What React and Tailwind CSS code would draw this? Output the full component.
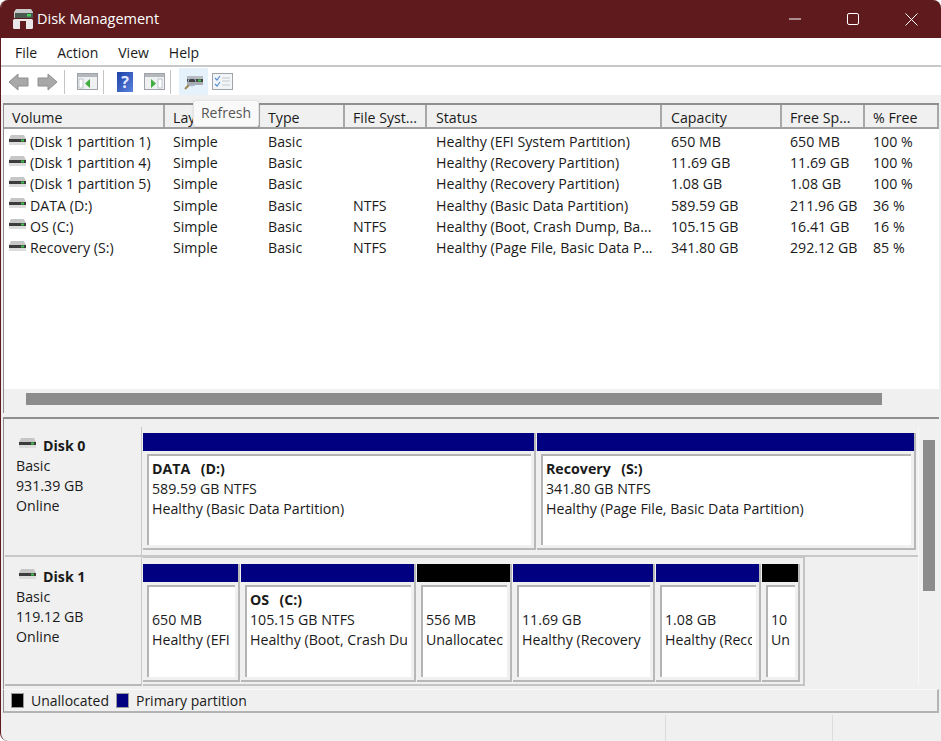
const FONT = "font-['Open_Sans','Noto_Sans',sans-serif]";

const COLS = [
  { label: 'Volume', w: 'w-[161px]', pl: 'pl-[8px]' },
  { label: 'Layout', w: 'w-[95px]', pl: 'pl-[8px]' },
  { label: 'Type', w: 'w-[85px]', pl: 'pl-[8px]' },
  { label: 'File Syst...', w: 'w-[82px]', pl: 'pl-[8px]' },
  { label: 'Status', w: 'w-[235px]', pl: 'pl-[9px]' },
  { label: 'Capacity', w: 'w-[120px]', pl: 'pl-[9px]' },
  { label: 'Free Sp...', w: 'w-[83px]', pl: 'pl-[8px]' },
  { label: '% Free', w: 'w-[74px]', pl: 'pl-[8px]' },
];

const ROWS = [
  ['(Disk 1 partition 1)', 'Simple', 'Basic', '', 'Healthy (EFI System Partition)', '650 MB', '650 MB', '100 %'],
  ['(Disk 1 partition 4)', 'Simple', 'Basic', '', 'Healthy (Recovery Partition)', '11.69 GB', '11.69 GB', '100 %'],
  ['(Disk 1 partition 5)', 'Simple', 'Basic', '', 'Healthy (Recovery Partition)', '1.08 GB', '1.08 GB', '100 %'],
  ['DATA (D:)', 'Simple', 'Basic', 'NTFS', 'Healthy (Basic Data Partition)', '589.59 GB', '211.96 GB', '36 %'],
  ['OS (C:)', 'Simple', 'Basic', 'NTFS', 'Healthy (Boot, Crash Dump, Ba...', '105.15 GB', '16.41 GB', '16 %'],
  ['Recovery (S:)', 'Simple', 'Basic', 'NTFS', 'Healthy (Page File, Basic Data P...', '341.80 GB', '292.12 GB', '85 %'],
];

const DISK1 = [
  { w: 'w-[97px]', lines: ['650 MB', 'Healthy (EFI'] },
  { w: 'w-[175px]', title: 'OS  (C:)', lines: ['105.15 GB NTFS', 'Healthy (Boot, Crash Du'] },
  { w: 'w-[95px]', black: true, lines: ['556 MB', 'Unallocatec'] },
  { w: 'w-[142px]', lines: ['11.69 GB', 'Healthy (Recovery'] },
  { w: 'w-[105px]', lines: ['1.08 GB', 'Healthy (Reco'] },
  { w: 'w-[38px]', black: true, lines: ['10', 'Un'] },
];

const DiskIcon = ({ className = '' }) => (
  <svg viewBox="0 0 17 11" className={`w-[17px] h-[11px] shrink-0 ${className}`}>
    <path d="M2 0h13l2 4H0z" fill="#c6c6c6" />
    <rect x="0" y="4" width="17" height="3" fill="#3c3c3c" />
    <rect x="12" y="4.5" width="3" height="2" fill="#3fc24a" />
    <rect x="0" y="7" width="17" height="3" fill="#dcdcdc" />
  </svg>
);

const AppIcon = () => (
  <svg viewBox="0 0 22 22" className="w-[22px] h-[22px]">
    <path d="M4 1h15l2 3v6H2V4z" fill="#c9c9c9" />
    <rect x="3" y="5" width="18" height="5" fill="#4a5a50" />
    <rect x="15" y="6" width="4" height="2.5" fill="#43d35a" />
    <rect x="1" y="11" width="20" height="10" rx="1.5" fill="#e8e8e8" />
    <rect x="8" y="13" width="6" height="8" fill="#5e1a1c" />
  </svg>
);

const Arrow = ({ flip }) => (
  <svg viewBox="0 0 21 18" className={`w-[21px] h-[18px] shrink-0 ${flip ? '-scale-x-100' : ''}`}>
    <path d="M1 9l9-8v4h10v8H10v4z" fill="#a8a8a8" stroke="#8f8f8f" />
  </svg>
);

const PaneIcon = ({ right }) => (
  <svg viewBox="0 0 21 17" className="w-[21px] h-[17px] shrink-0">
    <rect x="0.5" y="0.5" width="20" height="16" fill="#eef0f2" stroke="#a0a3a8" />
    <rect x="1" y="1" width="19" height="3" fill="#b4b7bc" />
    <rect x={right ? 14 : 2} y="6" width="4" height="9" fill="#fff" stroke="#9aa4b4" strokeWidth="0.6" />
    <path d={right ? 'M7 6l5 4.5-5 4.5z' : 'M13 6l-5 4.5 5 4.5z'} fill="#3fae3f" />
  </svg>
);

const Sep = () => <div className="w-px h-[24px] shrink-0 bg-[#c4c4c4]" />;

const Partition = ({ w, black, title, lines, last }) => (
  <div className={`${w} shrink-0 flex flex-col border-r-2 border-b-2 border-[#b8b8b8] ${last ? '' : 'mr-[1px]'}`}>
    <div className={`h-[18px] shrink-0 ${black ? 'bg-black' : 'bg-[#000080]'}`} />
    <div className="flex-1 min-h-0 flex pt-[3px] pr-[3px] pb-[3px] pl-[4px]">
      <div className="flex-1 min-w-0 bg-white border-l-2 border-t-2 border-[#b4b4b4] pl-[3px] pr-[4px] pt-[3px]">
        <div className="overflow-hidden whitespace-pre text-[14.2px] leading-[20px]">
          <div className="font-bold h-[20px] [word-spacing:1.5px]">{title}</div>
          {lines.map((l) => (
            <div key={l}>{l}</div>
          ))}
        </div>
      </div>
    </div>
  </div>
);

const DiskLabel = ({ name, size, bottom }) => (
  <div className={`w-[137px] shrink-0 bg-[#f0f0f0] border-r border-[#c8c8c8] pl-[11px] text-[14.2px] leading-[20px] ${bottom ? 'pt-[10px] border-b-2 border-b-[#b8b8b8]' : 'pt-[9px]'}`}>
    <div className="flex items-center font-bold h-[20px]">
      <DiskIcon className="ml-[3px] mr-[7px] -mt-[5px]" />
      {name}
    </div>
    <div>Basic</div>
    <div>{size}</div>
    <div>Online</div>
  </div>
);

export default function App() {
  return (
    <div className={`${FONT} relative w-[941px] h-[741px] overflow-hidden bg-[#f0f0f0] text-[#1a1a1a] flex flex-col border-l border-[#5e1a1c] rounded-t-[8px] rounded-bl-[8px]`}>
      {/* title bar */}
      <div className="h-[38px] -ml-[1px] shrink-0 bg-[#5e1a1c] flex items-center text-white pl-[12px]">
        <AppIcon />
        <span className="ml-[3px] text-[14.5px]">Disk Management</span>
        <div className="ml-auto flex items-center mr-[23px] gap-[46px]">
          <svg viewBox="0 0 12 12" className="w-[12px] h-[12px]"><path d="M0 6h12" stroke="#fff" strokeWidth="1" /></svg>
          <svg viewBox="0 0 12 12" className="w-[12px] h-[12px]"><rect x="0.5" y="0.5" width="11" height="11" rx="1.5" fill="none" stroke="#fff" /></svg>
          <svg viewBox="0 0 13 13" className="w-[13px] h-[13px]"><path d="M0.5 0.5l12 12M12.5 0.5l-12 12" stroke="#fff" /></svg>
        </div>
      </div>

      {/* menu */}
      <div className="h-[29px] shrink-0 bg-white border-b-2 border-[#c8c8c8] flex items-center pl-[14px] pt-[2px] gap-[20px] text-[14px]">
        <span>File</span>
        <span>Action</span>
        <span>View</span>
        <span>Help</span>
      </div>

      {/* toolbar */}
      <div className="h-[28px] shrink-0 bg-white flex items-center pl-[7px] pt-[1px]">
        <Arrow />
        <span className="w-[8px] shrink-0" />
        <Arrow flip />
        <span className="w-[6px] shrink-0" />
        <Sep />
        <span className="w-[12px] shrink-0" />
        <PaneIcon />
        <span className="w-[5px] shrink-0" />
        <Sep />
        <span className="w-[13px] shrink-0" />
        <div className="w-[16px] h-[20px] shrink-0 bg-linear-to-br from-[#1f3fa8] to-[#5a82dc] text-[#e4e8ff] text-[16px] font-bold leading-[20px] text-center">?</div>
        <span className="w-[11px] shrink-0" />
        <PaneIcon right />
        <span className="w-[5px] shrink-0" />
        <Sep />
        <span className="w-[8px] shrink-0" />
        <div className="w-[29px] h-[27px] shrink-0 bg-[#e5f1fb] flex items-center justify-center">
          <svg viewBox="0 0 20 18" className="w-[20px] h-[18px]">
            <rect x="3" y="3" width="16" height="3" fill="#b8bcc0" />
            <rect x="3" y="6" width="16" height="3" fill="#444" />
            <rect x="14" y="6.5" width="3" height="2" fill="#3fc24a" />
            <rect x="3" y="9" width="16" height="3" fill="#a8acb0" />
            <circle cx="8" cy="9" r="4" fill="none" stroke="#9fb4c8" />
            <path d="M5 12l-4 4" stroke="#a08552" strokeWidth="2" />
          </svg>
        </div>
        <span className="w-[4px] shrink-0" />
        <svg viewBox="0 0 21 17" className="w-[21px] h-[17px] shrink-0">
          <rect x="0.5" y="0.5" width="20" height="16" fill="#f2f5f8" stroke="#a0a3a8" />
          <path d="M3 5l2 2 3-4M3 11l2 2 3-4" fill="none" stroke="#5b8fd0" strokeWidth="1.2" />
          <path d="M10 5h8M10 8h8M10 12h8" stroke="#c5c8cc" />
        </svg>
      </div>

      <div className="h-[8px] shrink-0 bg-[#f0f0f0]" />

      {/* volume list */}
      <div className="h-[310px] shrink-0 bg-white ml-[2px] mr-[2px] border-t-2 border-l border-[#8f8f8f] text-[14.2px] flex flex-col">
        <div className="flex h-[24px] shrink-0 bg-[#f0f0f0] border-b-2 border-[#a0a0a0]">
          {COLS.map((c) => (
            <div key={c.label} className={`${c.w} ${c.pl} shrink-0 border-r-2 border-[#a8a8a8] leading-[26px] whitespace-nowrap overflow-hidden`}>
              {c.label}
            </div>
          ))}
        </div>
        <div className="flex-1 pt-[2px]">
          {ROWS.map((r) => (
            <div key={r[0]} className="flex h-[21.2px] leading-[21px]">
              {r.map((v, i) => (
                <div key={i} className={`${COLS[i].w} ${COLS[i].pl} shrink-0 whitespace-nowrap flex items-center overflow-hidden`}>
                  {i === 0 && <DiskIcon className="-ml-[3px] mr-[4px] -mt-[3px]" />}
                  {v}
                </div>
              ))}
            </div>
          ))}
        </div>
        {/* horizontal scrollbar */}
        <div className="h-[24px] shrink-0 bg-[#f0f0f0] pl-[22px] pt-[4px]">
          <div className="w-[856px] h-[12px] bg-[#8c8c8c]" />
        </div>
      </div>

      <div className="h-[6px] shrink-0 ml-[2px] mr-[2px] border-b-2 border-[#8f8f8f] bg-[#f0f0f0]" />

      {/* disk pane */}
      <div className="flex h-[270px] shrink-0 ml-[2px] mr-[2px] pt-[8px] pb-[3px] pl-[1px] bg-[#f0f0f0] border-l border-[#8f8f8f]">
        <div className="w-[913px] shrink-0 flex flex-col">
          <div className="flex h-[130px] shrink-0 border-b-2 border-[#c8c8c8]">
            <DiskLabel name="Disk 0" size="931.39 GB" />
            <div className="w-[775px] shrink-0 pl-[1px] pt-[6px] pb-[5px] flex">
              <Partition w="w-[393px]" title="DATA  (D:)" lines={['589.59 GB NTFS', 'Healthy (Basic Data Partition)']} />
              <Partition w="w-[379px]" title="Recovery  (S:)" last lines={['341.80 GB NTFS', 'Healthy (Page File, Basic Data Partition)']} />
            </div>
          </div>
          <div className="flex flex-1 min-h-0 items-stretch">
            <DiskLabel name="Disk 1" size="119.12 GB" bottom />
            <div className="shrink-0 ml-[1px] pt-[6px] pr-[3px] pb-[2px] border-t border-r-2 border-b-2 border-[#c4c4c4] flex">
              {DISK1.map((p, i) => (
                <Partition key={i} {...p} last={i === DISK1.length - 1} />
              ))}
            </div>
          </div>
        </div>
        {/* vertical scrollbar */}
        <div className="flex-1 pl-[4px] pt-[13px] border-l border-[#f8f8f8]">
          <div className="w-[12px] h-[151px] bg-[#8c8c8c]" />
        </div>
      </div>

      {/* legend */}
      <div className="h-[24px] shrink-0 ml-[2px] mr-[2px] flex items-center pl-[7px] text-[14px] border-t border-t-[#f8f8f8] border-l border-l-[#8f8f8f] border-r-2 border-r-[#b4b4b4] border-b-2 border-b-[#b4b4b4]">
        <span className="w-[13px] h-[15px] shrink-0 bg-black border border-[#9a9a9a]" />
        <span className="ml-[7px]">Unallocated</span>
        <span className="ml-[7px] w-[13px] h-[15px] shrink-0 bg-[#000080] border border-[#9a9a9a]" />
        <span className="ml-[7px]">Primary partition</span>
      </div>

      {/* status bar */}
      <div className="flex-1 flex pt-[2px]">
        <div className="w-[665px] border-r border-[#dcdcdc]" />
        <div className="w-[167px] border-r border-[#dcdcdc]" />
      </div>

      {/* tooltip */}
      <div className="absolute left-[192px] top-[100px] w-[66px] h-[27px] pb-[2px] bg-[#f9f9f9] border border-[#e4e4e4] rounded-[3px] shadow-sm text-[14px] text-[#555] flex items-center justify-center">
        Refresh
      </div>
    </div>
  );
}
